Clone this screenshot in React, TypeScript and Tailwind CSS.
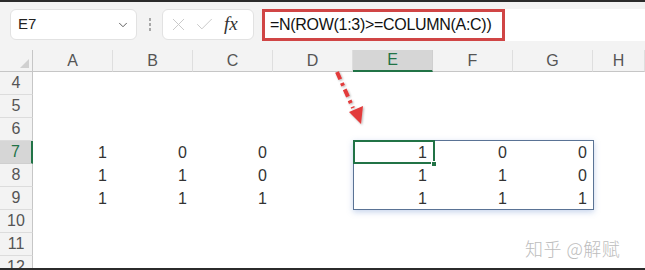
import { ChevronDown, X, Check } from "lucide-react";

const cols = ["A", "B", "C", "D", "E", "F", "G", "H"];
const rows = [4, 5, 6, 7, 8, 9, 10, 11, 12];

const data: Record<number, (string | null)[]> = {
  7: ["1", "0", "0", null, "1", "0", "0", null],
  8: ["1", "1", "0", null, "1", "1", "0", null],
  9: ["1", "1", "1", null, "1", "1", "1", null],
};

const font = { fontFamily: '"Liberation Sans", "Noto Sans CJK SC", sans-serif' };

export default function App() {
  return (
    <div
      className="relative w-[645px] h-[270px] overflow-hidden bg-white border-t-[2px] border-b-[2px] border-[#2b2b2b]"
      style={font}
    >
      {/* formula bar */}
      <div className="h-[48px] bg-[#f3f3f3] flex items-start pt-[7px] pl-[10px]">
        <div className="w-[127px] h-[31px] bg-white rounded-md border border-[#e2e2e2] flex items-center justify-between pl-[7px] pr-[6px]">
          <span className="text-[15px] text-[#222]">E7</span>
          <ChevronDown className="w-[14px] h-[14px] text-[#555]" strokeWidth={1.6} />
        </div>
        <div className="w-[25px] h-[31px] flex flex-col items-center justify-center gap-[2px]">
          <span className="w-[2px] h-[3px] bg-[#a8a8a8]" />
          <span className="w-[2px] h-[3px] bg-[#a8a8a8]" />
          <span className="w-[2px] h-[3px] bg-[#a8a8a8]" />
        </div>
        <div className="w-[92px] h-[31px] bg-white rounded-md border border-[#e2e2e2] flex items-center pl-[5px] gap-[5px]">
          <X className="w-[21px] h-[21px] text-[#c8c8c8]" strokeWidth={1.1} />
          <Check className="w-[21px] h-[21px] text-[#c8c8c8]" strokeWidth={1.1} />
          <span
            className="ml-[4px] text-[19px] italic text-[#333]"
            style={{ fontFamily: '"Liberation Serif", serif' }}
          >
            fx
          </span>
        </div>
        <div className="ml-[8px] flex-1 h-[32px] bg-white flex items-center">
          <div className="w-[243px] h-[32px] border-[3px] border-[#d04545] flex items-center pl-[5px]">
            <span className="text-[16px] text-[#111] tracking-[-0.3px]">=N(ROW(1:3)&gt;=COLUMN(A:C))</span>
          </div>
        </div>
      </div>

      {/* grid */}
      <div className="grid grid-cols-[33px_repeat(7,80px)_1fr] grid-rows-[22px_repeat(9,23px)] bg-white">
        <div className="bg-[#f3f3f3] border-r border-b border-[#c6c6c6] relative">
          <div className="absolute right-[3px] bottom-[3px] w-0 h-0 border-l-[9px] border-l-transparent border-b-[9px] border-b-[#d0d0d0]" />
        </div>
        {cols.map((c) =>
          c === "E" ? (
            <div
              key={c}
              className="bg-[#d6d6d6] border-b-[2px] border-[#217346] flex items-center justify-center text-[16px] text-[#217346] border-r border-r-[#cfcfcf]"
            >
              {c}
            </div>
          ) : (
            <div
              key={c}
              className="bg-[#f3f3f3] border-b border-b-[#c6c6c6] border-r border-r-[#dedede] flex items-center justify-center text-[16px] text-[#555]"
            >
              {c}
            </div>
          )
        )}
        {rows.map((r) => (
          <Row key={r} r={r} />
        ))}
      </div>

      {/* selection range E7:G9 */}
      <div className="absolute left-[353px] top-[138px] w-[241px] h-[70px] border border-[#5a7395] shadow-[0_2px_6px_rgba(90,130,200,0.35)]" />
      <div className="absolute left-[353px] top-[138px] w-[82px] h-[24px] border-[2px] border-[#217346]" />
      <div className="absolute left-[431px] top-[159px] w-[6px] h-[6px] bg-[#217346] border border-white" />

      {/* red dashed arrow */}
      <svg className="absolute left-[325px] top-[66px]" width="50" height="62" viewBox="0 0 50 62">
        <defs>
          <filter id="sh" x="-50%" y="-50%" width="200%" height="200%">
            <feDropShadow dx="1" dy="1" stdDeviation="1" floodColor="#000" floodOpacity="0.3" />
          </filter>
        </defs>
        <g filter="url(#sh)">
          <path
            d="M12 4 L28 40"
            stroke="#e23b3b"
            strokeWidth="4"
            strokeDasharray="8 4 3 4"
            fill="none"
          />
          <path d="M24 44 L38 38 L36 56 Z" fill="#e23b3b" />
        </g>
      </svg>

      {/* watermark */}
      <div
        className="absolute left-[525px] top-[233px] text-[18px] text-[#bdbdbd] tracking-[0.5px]"
        style={{ fontFamily: '"Noto Sans CJK SC", sans-serif', fontWeight: 300 }}
      >
        知乎 @解赋
      </div>
    </div>
  );
}

function Row({ r }: { r: number }) {
  const vals = data[r] || [];
  return (
    <>
      {r === 7 ? (
        <div className="bg-[#d6d6d6] border-r-[2px] border-[#217346] border-b border-b-[#cfcfcf] flex items-center justify-center text-[16px] text-[#217346]">
          {r}
        </div>
      ) : (
        <div className="bg-[#f3f3f3] border-r border-r-[#c6c6c6] border-b border-b-[#dcdcdc] flex items-center justify-center text-[16px] text-[#555]">
          {r}
        </div>
      )}
      {cols.map((c, i) => (
        <div key={c} className="flex items-center justify-end pr-[6px] text-[16px] text-[#333]">
          {vals[i] ?? ""}
        </div>
      ))}
    </>
  );
}
